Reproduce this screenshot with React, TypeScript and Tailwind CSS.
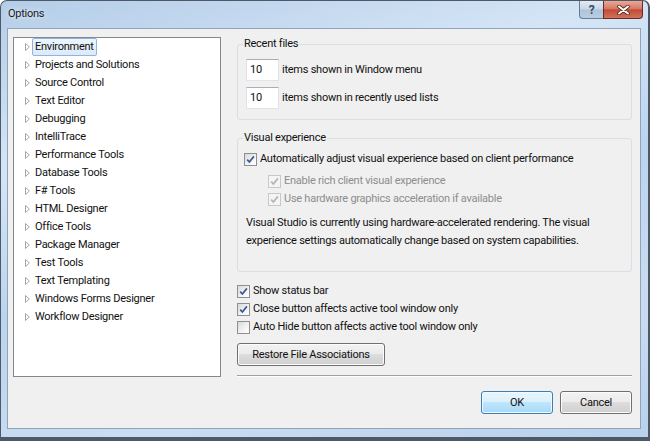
import clsx from "clsx";

const treeItems = [
    "Environment",
    "Projects and Solutions",
    "Source Control",
    "Text Editor",
    "Debugging",
    "IntelliTrace",
    "Performance Tools",
    "Database Tools",
    "F# Tools",
    "HTML Designer",
    "Office Tools",
    "Package Manager",
    "Test Tools",
    "Text Templating",
    "Windows Forms Designer",
    "Workflow Designer",
];

function CheckBox({ checked, disabled }: { checked?: boolean; disabled?: boolean }) {
    return (
        <span
            className={clsx(
                "relative inline-flex h-[13px] w-[13px] shrink-0 items-center justify-center border",
                disabled
                    ? "border-[#c8c8c8] bg-[#f4f4f4]"
                    : "border-[#8e8f8f] bg-[linear-gradient(135deg,#d8d8d8_0%,#f4f4f4_60%,#ffffff_100%)]"
            )}
        >
            {checked && (
                <svg width="9" height="9" viewBox="0 0 9 9" className="relative">
                    <path
                        d="M1.2 4.6 L3.4 7 L7.9 1.4"
                        fill="none"
                        stroke={disabled ? "#b4b4b4" : "#3b5797"}
                        strokeWidth="1.7"
                    />
                </svg>
            )}
        </span>
    );
}

function CheckRow({ label, checked, disabled }: { label: string; checked?: boolean; disabled?: boolean }) {
    return (
        <div className="flex h-[18px] items-center gap-[3px]">
            <CheckBox checked={checked} disabled={disabled} />
            <span className={disabled ? "text-[#8d8d8d]" : "text-[#111]"}>{label}</span>
        </div>
    );
}

function Arrow() {
    return (
        <svg width="5" height="8" viewBox="0 0 5 8" className="shrink-0">
            <path d="M0.5 0.5 L4.3 4 L0.5 7.5 Z" fill="#ffffff" stroke="#a6a6a6" strokeWidth="1" />
        </svg>
    );
}

function WinButton({ children, primary, className }: { children: React.ReactNode; primary?: boolean; className?: string }) {
    return (
        <button
            type="button"
            className={clsx(
                "h-[23px] rounded-[3px] border text-[#111]",
                primary
                    ? "border-[#3c7fb1] bg-[linear-gradient(to_bottom,#eaf6fd_0%,#d9f0fc_49%,#bee6fd_50%,#a7d9f5_100%)] shadow-[inset_0_0_0_1px_#f2faff]"
                    : "border-[#707070] bg-[linear-gradient(to_bottom,#f2f2f2_0%,#ebebeb_49%,#dddddd_50%,#cfcfcf_100%)] shadow-[inset_0_0_0_1px_#fcfcfc]",
                className
            )}
        >
            {children}
        </button>
    );
}

export default function App() {
    return (
        <div className="h-[441px] w-[650px] overflow-hidden bg-white font-['Roboto','Liberation_Sans',sans-serif] text-[11px] leading-[14px] tracking-[-0.25px] text-[#111]">
            <div className="flex h-[441px] w-[650px] flex-col rounded-t-[7px] border-t border-r-[2px] border-b-[4px] border-l border-[#4d5967] bg-[linear-gradient(165deg,#b4cde8_0%,#d4e5f6_28%,#bcd4ee_52%,#cadcf1_78%,#b9d1eb_100%)]">
                {/* title bar */}
                <div className="flex h-[27px] shrink-0 items-start justify-between pl-[7px]">
                    <span className="mt-[6px] text-[#1b1b1b] [text-shadow:0_0_6px_#ffffff]">Options</span>
                    <div className="mr-[5px] flex">
                        <div className="flex h-[18px] w-[24px] items-center justify-center rounded-bl-[4px] border border-t-0 border-r-0 border-[#687b92] bg-[linear-gradient(to_bottom,#e3ebf4_0%,#c8d7e7_48%,#aec3da_52%,#b9cde2_100%)] text-[12px] font-bold text-[#3a4a5e]">
                            ?
                        </div>
                        <div className="flex h-[18px] w-[40px] items-center justify-center rounded-br-[4px] border border-t-0 border-[#6b2b24] bg-[linear-gradient(to_bottom,#eaa898_0%,#d67a64_45%,#c24a34_52%,#d0735a_100%)]">
                            <svg width="13" height="10" viewBox="0 0 13 10">
                                <path d="M2 1.5 L11 8.5 M11 1.5 L2 8.5" stroke="#5a2a24" strokeWidth="3.6" strokeLinecap="round" />
                                <path d="M2 1.5 L11 8.5 M11 1.5 L2 8.5" stroke="#ffffff" strokeWidth="2" strokeLinecap="round" />
                            </svg>
                        </div>
                    </div>
                </div>

                {/* client area */}
                <div className="mb-[8px] ml-[6px] mr-[7px] flex min-h-0 flex-1 items-start border border-[#8fa3ba] bg-[#f0f0f0] pl-[5px] pt-[8px]">
                    {/* tree */}
                    <div className="h-[340px] w-[208px] shrink-0 border border-[#828790] bg-white pl-[11px]">
                        {treeItems.map((item, i) => (
                            <div key={item} className="flex h-[18px] items-center gap-[2px]">
                                <Arrow />
                                <span
                                    className={clsx(
                                        "flex h-[18px] items-center rounded-[2px] border px-[2px]",
                                        i === 0
                                            ? "border-[#8fb4e0] bg-[linear-gradient(to_bottom,#eef5fd,#dce9f8)]"
                                            : "border-transparent"
                                    )}
                                >
                                    {item}
                                </span>
                            </div>
                        ))}
                    </div>

                    {/* right column */}
                    <div className="ml-[16px] flex w-[395px] flex-col">
                        <fieldset className="rounded-[3px] border border-[#d5dfe5] px-[6px] pb-[10px]">
                            <legend className="-ml-[1px] px-[1px] leading-[14px]">Recent files</legend>
                            <div className="mt-[8px] flex flex-col gap-[6px]">
                                {["items shown in Window menu", "items shown in recently used lists"].map((t) => (
                                    <div key={t} className="flex items-center gap-[3px]">
                                        <div className="ml-[2px] flex h-[22px] w-[33px] items-center border border-[#e2e3ea] border-t-[#abadb3] bg-white pl-[3px]">
                                            10
                                        </div>
                                        <span>{t}</span>
                                    </div>
                                ))}
                            </div>
                        </fieldset>

                        <fieldset className="mt-[11px] rounded-[3px] border border-[#d5dfe5] px-[6px] pb-[21px]">
                            <legend className="-ml-[1px] px-[1px] leading-[14px]">Visual experience</legend>
                            <div className="mt-[5px]">
                                <CheckRow label="Automatically adjust visual experience based on client performance" checked />
                            </div>
                            <div className="mt-[4px] pl-[24px]">
                                <CheckRow label="Enable rich client visual experience" checked disabled />
                                <CheckRow label="Use hardware graphics acceleration if available" checked disabled />
                            </div>
                            <p className="ml-[2px] mt-[6px] whitespace-nowrap leading-[18px]">
                                Visual Studio is currently using hardware-accelerated rendering. The visual
                                <br />
                                experience settings automatically change based on system capabilities.
                            </p>
                        </fieldset>

                        <div className="mt-[10px]">
                            <CheckRow label="Show status bar" checked />
                            <CheckRow label="Close button affects active tool window only" checked />
                            <CheckRow label="Auto Hide button affects active tool window only" />
                        </div>

                        <WinButton className="mt-[7px] w-[148px]">Restore File Associations</WinButton>

                        <div className="mt-[9px] border-t border-b border-t-[#a0a0a0] border-b-white" />

                        <div className="mt-[14px] flex justify-end gap-[7px]">
                            <WinButton primary className="w-[72px]">
                                OK
                            </WinButton>
                            <WinButton className="w-[72px]">Cancel</WinButton>
                        </div>
                    </div>
                </div>
            </div>
        </div>
    );
}
